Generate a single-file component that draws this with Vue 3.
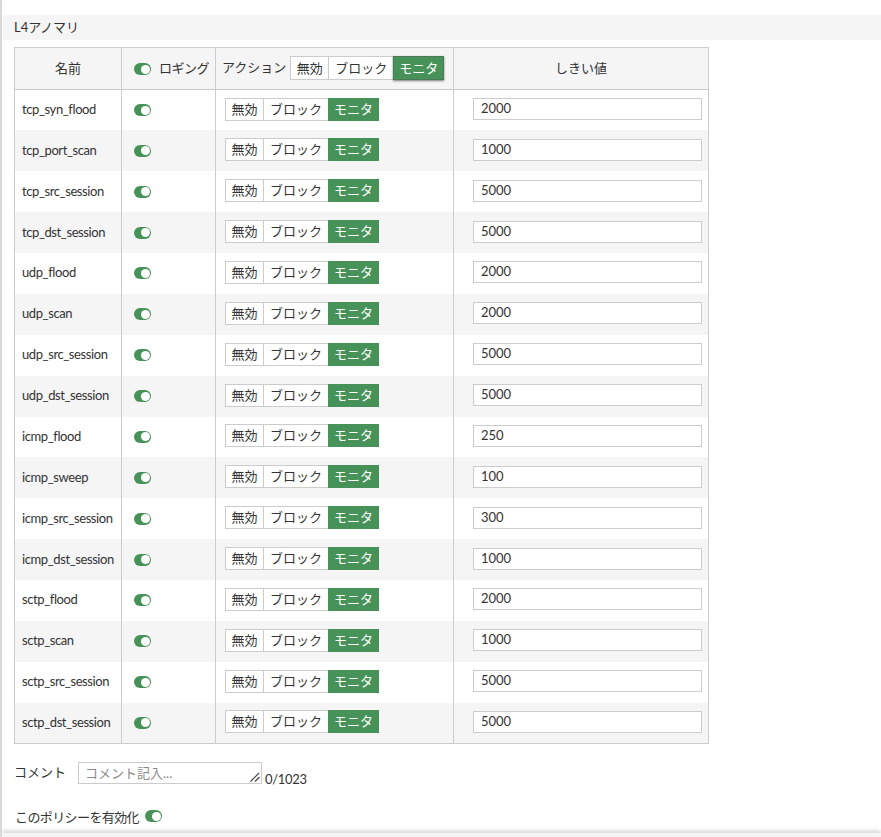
<template>
  <div class="page">
    <div class="section-title">L4アノマリ</div>

    <table class="anomaly-table">
      <colgroup>
        <col class="col-name" />
        <col class="col-log" />
        <col class="col-action" />
        <col class="col-threshold" />
      </colgroup>
      <thead>
        <tr>
          <th>名前</th>
          <th class="log-head">
            <span class="toggle"></span>
            <span class="log-label">ロギング</span>
          </th>
          <th class="action-head">
            <span class="action-label">アクション</span>
            <div class="seg-group">
              <span class="seg seg-off">無効</span>
              <span class="seg seg-block">ブロック</span>
              <span class="seg seg-monitor raised">モニタ</span>
            </div>
          </th>
          <th>しきい値</th>
        </tr>
      </thead>
      <tbody>
        <tr v-for="row in rows" :key="row.name">
          <td class="name-cell">{{ row.name }}</td>
          <td class="log-cell"><span class="toggle"></span></td>
          <td class="action-cell">
            <div class="seg-group">
              <span class="seg seg-off">無効</span>
              <span class="seg seg-block">ブロック</span>
              <span class="seg seg-monitor">モニタ</span>
            </div>
          </td>
          <td class="threshold-cell">
            <input class="threshold-input" type="text" :value="row.threshold" />
          </td>
        </tr>
      </tbody>
    </table>

    <div class="comment-row">
      <label class="comment-label">コメント</label>
      <div class="comment-box">
        <textarea class="comment-input" placeholder="コメント記入..."></textarea>
        <svg class="resize-grip" width="10" height="10" viewBox="0 0 10 10">
          <path d="M0.5 9.5 L9 1 M5 9.5 L9.5 5" stroke="#444" stroke-width="1.2" fill="none" />
        </svg>
      </div>
      <span class="comment-count">0/1023</span>
    </div>

    <div class="policy-row">
      <span class="policy-label">このポリシーを有効化</span>
      <span class="toggle"></span>
    </div>

    <div class="bottom-edge"></div>
  </div>
</template>

<script setup>
const rows = [
  { name: 'tcp_syn_flood', threshold: 2000 },
  { name: 'tcp_port_scan', threshold: 1000 },
  { name: 'tcp_src_session', threshold: 5000 },
  { name: 'tcp_dst_session', threshold: 5000 },
  { name: 'udp_flood', threshold: 2000 },
  { name: 'udp_scan', threshold: 2000 },
  { name: 'udp_src_session', threshold: 5000 },
  { name: 'udp_dst_session', threshold: 5000 },
  { name: 'icmp_flood', threshold: 250 },
  { name: 'icmp_sweep', threshold: 100 },
  { name: 'icmp_src_session', threshold: 300 },
  { name: 'icmp_dst_session', threshold: 1000 },
  { name: 'sctp_flood', threshold: 2000 },
  { name: 'sctp_scan', threshold: 1000 },
  { name: 'sctp_src_session', threshold: 5000 },
  { name: 'sctp_dst_session', threshold: 5000 }
]
</script>

<style scoped>
.page {
  position: relative;
  box-sizing: border-box;
  height: 837px;
  overflow: hidden;
  padding-top: 15px;
  background: #fff;
  border-left: 2px solid #d8d8d8;
  color: #333;
  font-family: Lato, "Noto Sans CJK JP", sans-serif;
  font-size: 13px;
}

.section-title {
  height: 25px;
  line-height: 25px;
  margin-left: 1px;
  padding-left: 11px;
  background: #f5f5f5;
}

.anomaly-table {
  width: 695px;
  margin: 7px 0 0 12px;
  border: 1px solid #ccc;
  border-collapse: collapse;
  table-layout: fixed;
}

.col-name { width: 107px; }
.col-log { width: 94px; }
.col-action { width: 238px; }

th {
  box-sizing: border-box;
  height: 42px;
  padding: 0 0 3px;
  background: #f5f5f5;
  border: 1px solid #ccc;
  font-weight: 400;
  text-align: center;
}

td {
  box-sizing: border-box;
  height: 40.875px;
  padding: 0;
  border-left: 1px solid #ccc;
  border-right: 1px solid #ccc;
}

tbody tr:nth-child(even) td {
  background: #f5f5f5;
}

.log-head {
  text-align: left;
  padding-left: 12px;
}

.log-label {
  margin-left: 8px;
  letter-spacing: -0.5px;
}

.action-head {
  text-align: left;
  padding-bottom: 2px;
}

.action-head > * {
  vertical-align: middle;
}

.action-head .seg-group,
.action-head .seg {
  height: 24px;
}

.action-head .seg {
  line-height: 22px;
}

.action-label {
  margin-left: 6px;
  margin-right: 4px;
  position: relative;
  top: -1px;
}

.name-cell {
  padding-left: 7px;
  padding-bottom: 2px;
  letter-spacing: -0.4px;
}

.log-cell {
  padding-left: 12px;
}

.log-cell .toggle {
  display: block;
}

.action-cell {
  padding: 0 0 2px 9px;
}

.action-cell .seg-group {
  display: flex;
}

.threshold-cell {
  padding: 0 0 2px 19px;
}

.toggle {
  position: relative;
  display: inline-block;
  vertical-align: middle;
  width: 17px;
  height: 12px;
  border-radius: 6px;
  background: #479259;
}

.toggle::after {
  content: "";
  position: absolute;
  top: 1.5px;
  right: 1.5px;
  width: 9px;
  height: 9px;
  border-radius: 50%;
  background: #fff;
}

.seg-group {
  display: inline-flex;
  height: 23px;
}

.seg {
  box-sizing: border-box;
  height: 23px;
  line-height: 20px;
  background: #fff;
  border: 1px solid #ccc;
  text-align: center;
}

.seg-off { width: 39px; }

.seg-block {
  width: 64px;
  border-left: 0;
  border-right: 0;
}

.seg-monitor {
  width: 51px;
  background: #479259;
  border-color: #479259;
  color: #fff;
}

.raised {
  box-shadow: 0 1px 2px rgba(0, 0, 0, 0.5);
  border-color: #4b7a58;
}

.threshold-input {
  display: block;
  box-sizing: border-box;
  width: 229px;
  height: 22px;
  padding: 0 7px 2px;
  border: 1px solid #ccc;
  border-radius: 0;
  outline: none;
  background: #fff;
  color: #333;
  font: inherit;
}

.comment-row {
  display: flex;
  align-items: flex-start;
  margin: 18px 0 0 12px;
}

.comment-label {
  width: 64px;
  line-height: 20px;
}

.comment-box {
  position: relative;
  width: 184px;
  height: 22px;
}

.comment-input {
  display: block;
  box-sizing: border-box;
  width: 100%;
  height: 100%;
  padding: 2px 6px;
  border: 1px solid #ccc;
  outline: none;
  resize: none;
  overflow: hidden;
  font: inherit;
  line-height: 16px;
}

.comment-input::placeholder {
  color: #8a8a8a;
}

.resize-grip {
  position: absolute;
  right: 2px;
  bottom: 2px;
}

.comment-count {
  margin-left: 3px;
  margin-top: 9px;
  line-height: 16px;
  letter-spacing: -0.3px;
}

.policy-row {
  display: flex;
  align-items: center;
  gap: 6px;
  margin: 20px 0 0 13px;
  height: 18px;
}

.policy-label {
  letter-spacing: -0.6px;
}

.bottom-edge {
  position: absolute;
  left: 0;
  right: 0;
  bottom: 0;
  height: 4px;
  background: #f5f5f5;
  box-shadow: 0 -2px 4px rgba(0, 0, 0, 0.2);
}
</style>

<style>
html, body {
  margin: 0;
  background: #fff;
}
</style>
